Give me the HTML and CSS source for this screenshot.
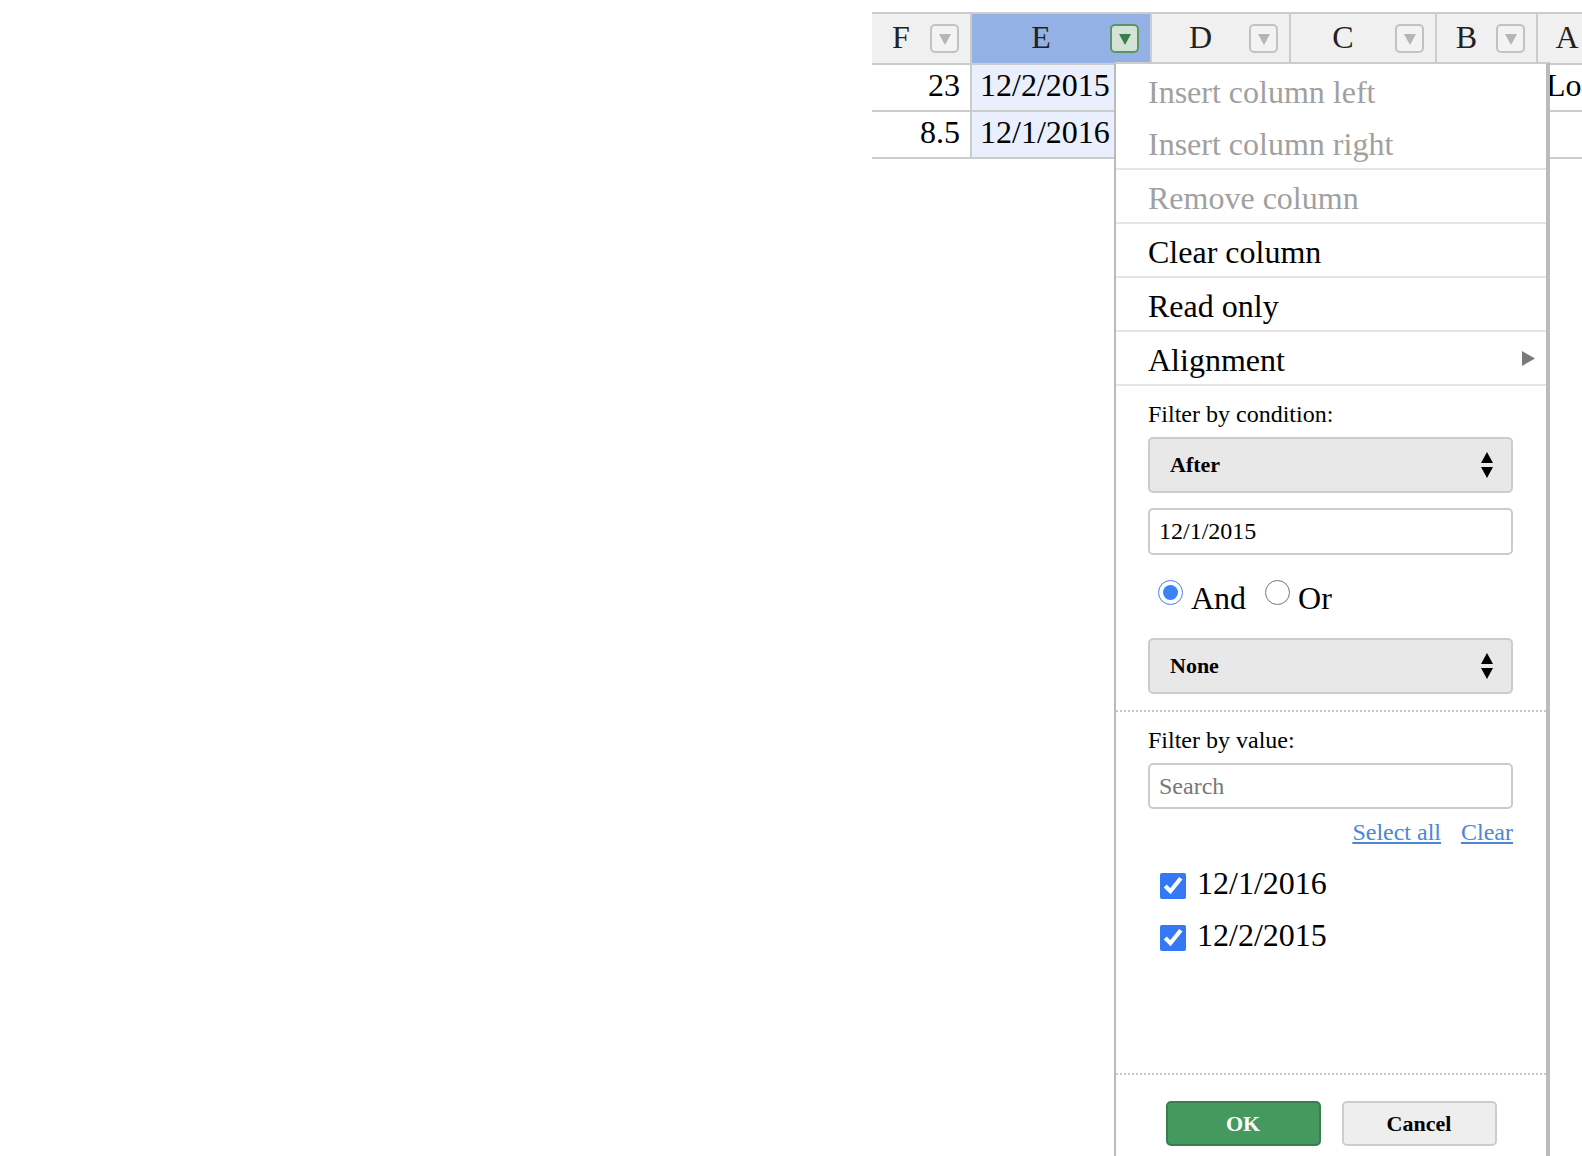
FILE: index.html
```html
<!DOCTYPE html>
<html lang="en">
<head>
  <meta charset="UTF-8">
  <meta name="viewport" content="width=device-width, initial-scale=1.0">
  <title>Column filter</title>
  <link rel="stylesheet" href="styles.css">
</head>
<body>
  <div class="sheet">
    <div class="row head">
      <div class="cell col-f"><span class="col-label">F</span><button class="col-btn"><svg width="12" height="11" viewBox="0 0 12 11"><polygon points="0,0 12,0 6,11"/></svg></button></div>
      <div class="cell col-e selected"><span class="col-label">E</span><button class="col-btn active"><svg width="12" height="11" viewBox="0 0 12 11"><polygon points="0,0 12,0 6,11"/></svg></button></div>
      <div class="cell col-d"><span class="col-label">D</span><button class="col-btn"><svg width="12" height="11" viewBox="0 0 12 11"><polygon points="0,0 12,0 6,11"/></svg></button></div>
      <div class="cell col-c"><span class="col-label">C</span><button class="col-btn"><svg width="12" height="11" viewBox="0 0 12 11"><polygon points="0,0 12,0 6,11"/></svg></button></div>
      <div class="cell col-b"><span class="col-label">B</span><button class="col-btn"><svg width="12" height="11" viewBox="0 0 12 11"><polygon points="0,0 12,0 6,11"/></svg></button></div>
      <div class="cell col-a"><span class="col-label">A</span><button class="col-btn"><svg width="12" height="11" viewBox="0 0 12 11"><polygon points="0,0 12,0 6,11"/></svg></button></div>
    </div>
    <div class="row">
      <div class="cell col-f num">23</div>
      <div class="cell col-e current">12/2/2015</div>
      <div class="cell col-d"></div>
      <div class="cell col-c"></div>
      <div class="cell col-b"></div>
      <div class="cell col-a">Lorem</div>
    </div>
    <div class="row">
      <div class="cell col-f num">8.5</div>
      <div class="cell col-e current">12/1/2016</div>
      <div class="cell col-d"></div>
      <div class="cell col-c"></div>
      <div class="cell col-b"></div>
      <div class="cell col-a"></div>
    </div>
  </div>

  <div class="dropdown-menu">
    <div class="item disabled"><span class="item-text">Insert column left</span></div>
    <div class="item disabled"><span class="item-text">Insert column right</span></div>
    <div class="separator"></div>
    <div class="item disabled"><span class="item-text">Remove column</span></div>
    <div class="separator"></div>
    <div class="item"><span class="item-text">Clear column</span></div>
    <div class="separator"></div>
    <div class="item"><span class="item-text">Read only</span></div>
    <div class="separator"></div>
    <div class="item submenu">
      <span class="item-text">Alignment</span>
      <svg class="submenu-arrow" width="13" height="15" viewBox="0 0 13 15"><polygon points="0,0 13,7.5 0,15"/></svg>
    </div>
    <div class="separator"></div>

    <div class="filter condition">
      <div class="filter-label">Filter by condition:</div>
      <div class="select">
        <span>After</span>
        <svg width="12" height="26" viewBox="0 0 12 26"><polygon points="6,0 12,11 0,11"/><polygon points="0,15 12,15 6,26"/></svg>
      </div>
      <input class="text-input" type="text" value="12/1/2015">
      <div class="radio-row">
        <label class="radio-label"><input type="radio" name="op" checked><span>And</span></label>
        <label class="radio-label"><input type="radio" name="op"><span>Or</span></label>
      </div>
      <div class="select select-second">
        <span>None</span>
        <svg width="12" height="26" viewBox="0 0 12 26"><polygon points="6,0 12,11 0,11"/><polygon points="0,15 12,15 6,26"/></svg>
      </div>
    </div>

    <div class="filter value">
      <div class="filter-label">Filter by value:</div>
      <input class="text-input search" type="text" placeholder="Search">
      <div class="links">
        <a href="#">Select all</a>
        <a href="#">Clear</a>
      </div>
      <div class="value-list">
        <label class="value-item"><input type="checkbox" checked><span>12/1/2016</span></label>
        <label class="value-item"><input type="checkbox" checked><span>12/2/2015</span></label>
      </div>
    </div>

    <div class="actions">
      <button class="btn btn-ok">OK</button>
      <button class="btn btn-cancel">Cancel</button>
    </div>
  </div>
</body>
</html>
```

FILE: styles.css
```css
body {
  font-family: 'Liberation Serif', 'Times New Roman', serif;
  color: #000000;
  background-color: #FFFFFF;
  margin: 0;
  width: 1582px;
  height: 1156px;
  overflow: hidden;
  position: relative;
}

/* Sheet */
.sheet {
  margin: 12px 0 0 872px;
  width: 710px;
  overflow: hidden;
}

.row {
  display: flex;
  width: max-content;
}

.cell {
  box-sizing: border-box;
  height: 47px;
  padding: 0 8px;
  border-right: 2px solid #CCCCCC;
  border-bottom: 2px solid #CCCCCC;
  font-size: 32px;
  line-height: 40px;
  white-space: nowrap;
  overflow: hidden;
  background-color: #FFFFFF;
}

.col-f { width: 100px; }
.col-e { width: 180px; }
.col-d { width: 139px; }
.col-c { width: 146px; }
.col-b { width: 101px; }
.col-a { width: 100px; }

.cell.num {
  text-align: right;
  padding-right: 10px;
}

.cell.current {
  background-color: #E9EFFC;
}

.head {
  border-top: 2px solid #CCCCCC;
}

.head .cell {
  height: 51px;
  display: flex;
  align-items: center;
  padding: 0 11px 0 0;
  background-color: #F0F0F0;
  color: #222222;
  font-size: 32px;
}

.head .cell.selected {
  background-color: #93B1E4;
}

.col-label {
  flex: 1;
  text-align: center;
  margin-bottom: 4px;
}

.col-btn {
  box-sizing: border-box;
  width: 29px;
  height: 29px;
  padding: 0;
  border: 2px solid #C2C2C2;
  border-radius: 5px;
  background-color: #F3F3F3;
  display: flex;
  align-items: center;
  justify-content: center;
}

.col-btn svg {
  fill: #B5B5B5;
  margin-top: 2px;
}

.col-btn.active {
  background-color: #D5E3D7;
  border-color: #5C936A;
}

.col-btn.active svg {
  fill: #3C7D4C;
}

/* Dropdown menu */
.dropdown-menu {
  position: absolute;
  left: 1114px;
  top: 62px;
  width: 436px;
  box-sizing: border-box;
  background-color: #FFFFFF;
  border-top: 2px solid #CCCCCC;
  border-left: 2px solid #BBBBBB;
  border-right: 4px solid #BBBBBB;
}

.item {
  height: 52px;
  display: flex;
  align-items: center;
  justify-content: space-between;
  padding: 0 11px 0 32px;
  font-size: 32px;
  white-space: nowrap;
}

.item-text {
  line-height: 48px;
  padding-top: 4px;
}

.item.disabled {
  color: #A0A0A0;
}

.submenu-arrow {
  fill: #7A7A7A;
}

.separator {
  height: 2px;
  background-color: #E5E5E5;
}

/* Filters */
.filter {
  padding: 13px 33px 16px 32px;
}

.filter.value {
  padding-top: 13px;
  border-top: 2px dotted #C8C8C8;
}

.filter-label {
  font-size: 24px;
  line-height: 30px;
}

.select {
  box-sizing: border-box;
  height: 56px;
  margin-top: 8px;
  padding: 0 18px 0 20px;
  display: flex;
  align-items: center;
  justify-content: space-between;
  border: 2px solid #CCCCCC;
  border-radius: 5px;
  background-color: #E8E8E8;
  font-size: 22px;
  font-weight: bold;
}

.select-second {
  margin-top: 24px;
}

.text-input {
  display: block;
  box-sizing: border-box;
  width: 100%;
  height: 47px;
  margin: 15px 0 0 0;
  padding: 0 9px;
  border: 2px solid #CCCCCC;
  border-radius: 5px;
  font-family: inherit;
  font-size: 24px;
  color: #000000;
  outline: none;
}

.text-input.search {
  height: 46px;
  margin-top: 8px;
}

.text-input::placeholder {
  color: #777777;
}

.radio-row {
  display: flex;
  gap: 19px;
  margin-top: 16px;
  font-size: 32px;
}

.radio-label {
  display: inline-flex;
  align-items: center;
  gap: 8px;
}

.radio-label:first-child {
  margin-left: 10px;
}

.radio-label input {
  width: 25px;
  height: 25px;
  margin: 0;
  accent-color: #3B82F6;
}

.radio-label span {
  line-height: 32px;
  padding-top: 11px;
}

.links {
  display: flex;
  justify-content: flex-end;
  gap: 20px;
  margin-top: 8px;
  font-size: 24px;
  line-height: 30px;
}

.links a {
  color: #4A87D9;
  text-decoration: underline;
}

.value-list {
  height: 200px;
  margin-top: 10px;
}

.value-item {
  height: 52px;
  display: flex;
  align-items: center;
  gap: 11px;
  padding-left: 12px;
  font-size: 32px;
}

.value-item input {
  width: 26px;
  height: 26px;
  margin: 6px 0 0 0;
  accent-color: #3478F6;
}

/* Buttons */
.actions {
  display: flex;
  justify-content: center;
  gap: 21px;
  padding: 26px 0;
  border-top: 2px dotted #C8C8C8;
}

.btn {
  width: 155px;
  height: 45px;
  border-radius: 5px;
  font-family: inherit;
  font-size: 22px;
  font-weight: bold;
  cursor: pointer;
}

.btn-ok {
  background-color: #46995E;
  border: 2px solid #3A7D4E;
  color: #FFFFFF;
}

.btn-cancel {
  background-color: #EEEEEE;
  border: 2px solid #CCCCCC;
  color: #000000;
}
```
